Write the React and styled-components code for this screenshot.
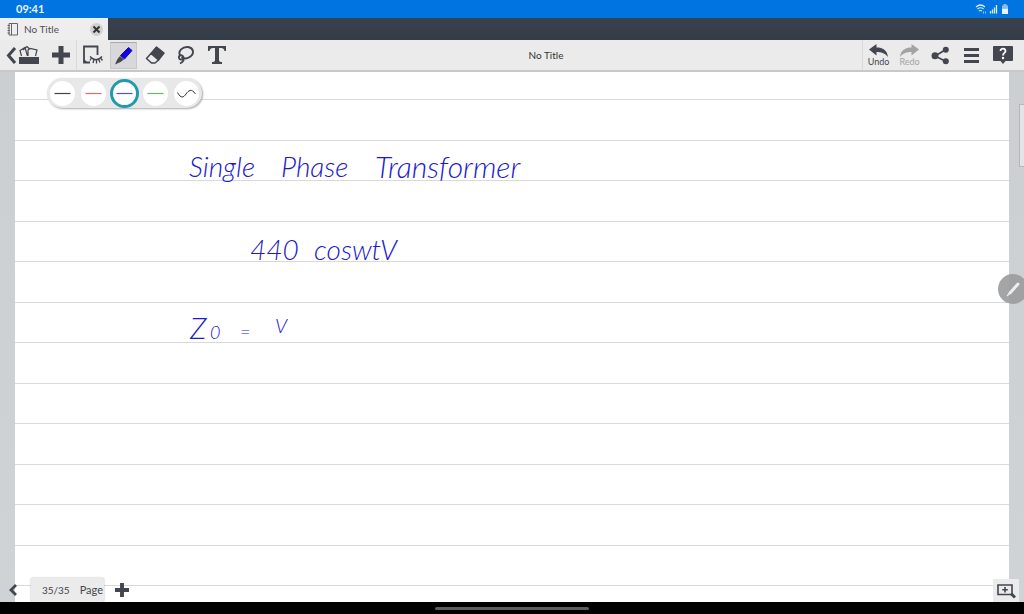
import React from 'react';
import styled, { createGlobalStyle, css } from 'styled-components';

const INK = '#43454f';

const GlobalStyle = createGlobalStyle`
  *, *::before, *::after { box-sizing: border-box; }
  body { margin: 0; background: #000; }
  svg { display: block; }
`;

const Screen = styled.div`
  display: flex;
  flex-direction: column;
  min-height: 100vh;
  font-family: Lato, 'Open Sans', sans-serif;
  color: ${INK};
`;

const PlainButton = styled.button`
  padding: 0;
  border: 0;
  background: none;
  color: inherit;
  font: inherit;
  cursor: pointer;
`;

const StatusBar = styled.div`
  display: flex;
  align-items: center;
  justify-content: space-between;
  height: 18px;
  padding: 0 15px 0 16px;
  background: #0074e0;
  color: #eaf4ff;
  font-size: 11px;
  line-height: 18px;
  font-weight: 700;
`;

const TabStrip = styled.nav`
  display: flex;
  height: 22px;
  background: linear-gradient(#38424f, #343c46);
`;

const Tab = styled.div`
  display: flex;
  align-items: center;
  width: 108px;
  padding: 0 5px 0 7px;
  background: #eeeeee;
  color: #505050;
  font-size: 10px;
`;

const TabName = styled.span`
  flex: 1;
  padding-left: 6px;
`;

const CloseButton = styled(PlainButton)`
  display: grid;
  place-items: center;
  width: 13px;
  height: 13px;
  border-radius: 50%;
  background: #d0d0d0;
`;

const Toolbar = styled.header`
  display: flex;
  height: 32px;
  padding-right: 6px;
  background: #ebebeb;
  border-bottom: 2px solid #c6c8c9;
`;

const ToolGroup = styled.div`
  display: flex;
  align-items: center;
  ${(p) => p.$divided && css`border-left: 1px solid #d9d9d9;`}
`;

const Tool = styled(PlainButton)`
  display: flex;
  flex-direction: column;
  align-items: center;
  justify-content: center;
  width: ${(p) => (p.$wide ? 45 : 31)}px;
  height: 30px;
  color: ${(p) => (p.disabled ? '#a3a3a3' : INK)};
  font-size: 9px;
  line-height: 10px;
`;

const ToolFace = styled.span`
  display: grid;
  place-items: center;
  width: 27px;
  height: 27px;
  ${(p) => p.$active && css`
    background: #d8d8da;
    border: 1px solid #c8c8ca;
    border-top-color: #aaaaaa;
  `}
`;

const Title = styled.h1`
  flex: 1;
  margin: 0;
  padding-right: 2px;
  text-align: center;
  font-size: 10px;
  line-height: 30px;
  font-weight: 400;
  color: #333333;
`;

const Workspace = styled.main`
  position: relative;
  display: flex;
  flex: 1;
  padding: 0 15px;
  overflow: hidden;
  background: linear-gradient(#cbcfd1, #d0d3d5);
`;

const Sheet = styled.section`
  position: relative;
  display: flex;
  flex-direction: column;
  flex: 1;
  min-height: 480px;
  background: #ffffff;
`;

const Rule = styled.div`
  flex: ${(p) => (p.$first ? '0 0 28px' : '1')};
  border-bottom: 1px solid #d9d9d9;
`;

const SheetFoot = styled.div`
  height: 16px;
`;

const Ink = styled.span`
  position: absolute;
  left: ${(p) => p.$x}px;
  top: ${(p) => p.$y}px;
  color: #2018d0;
  font-size: ${(p) => p.$size}px;
  line-height: 32px;
  font-style: italic;
  font-weight: 300;
  white-space: nowrap;
`;

const Palette = styled.div`
  position: absolute;
  left: 47px;
  top: 6px;
  display: flex;
  align-items: center;
  height: 30px;
  border-radius: 15px;
  background: #e8e8e8;
  box-shadow: 1px 1px 2px #aaaaaa;
`;

const PenButton = styled(PlainButton)`
  display: grid;
  place-items: center;
  width: ${(p) => (p.$active ? 29 : 25)}px;
  height: ${(p) => (p.$active ? 29 : 25)}px;
  margin: 0 ${(p) => (p.$active ? 1 : 3)}px;
  border: ${(p) => (p.$active ? '3px solid #2199ae' : '0')};
  border-radius: 50%;
  background: #ffffff;
`;

const PageBar = styled.div`
  position: absolute;
  left: 0;
  bottom: 0;
  display: flex;
  align-items: center;
  height: 25px;
`;

const PageArrow = styled(PlainButton)`
  display: grid;
  place-items: center;
  width: 31px;
  height: 24px;
  padding-right: 6px;
`;

const PageLabel = styled(PlainButton)`
  display: flex;
  align-items: center;
  justify-content: flex-end;
  gap: 10px;
  width: 73px;
  height: 24px;
  padding-right: 1px;
  border-radius: 2px;
  background: #ebebeb;
  box-shadow: 0 0 2px #aaaaaa;
  font-size: 11px;
`;

const PageCount = styled.span`
  font-size: 10px;
`;

const AddPage = styled(PlainButton)`
  display: grid;
  place-items: center;
  width: 35px;
  height: 25px;
`;

const ZoomButton = styled(PlainButton)`
  position: absolute;
  right: 5px;
  bottom: 0;
  display: grid;
  place-items: center;
  width: 26px;
  height: 23px;
  background: #ebebeb;
`;

const FloatingPen = styled(PlainButton)`
  position: absolute;
  right: -4px;
  top: 202px;
  display: grid;
  place-items: center;
  width: 30px;
  height: 30px;
  border-radius: 50%;
  background: #9a9b9ce6;
`;

const EdgeHandle = styled.div`
  position: absolute;
  right: 0;
  top: 32px;
  width: 5px;
  height: 63px;
  border: 1px solid #b4b7b9;
  border-right: 0;
  background: #e2e4e5;
`;

const NavBar = styled.footer`
  display: grid;
  place-items: center;
  height: 12px;
  background: #000000;
`;

const NavPill = styled.div`
  width: 15%;
  height: 3px;
  border-radius: 2px;
  background: #5c5c5c;
`;

const Plus = ({ size }) => (
  <svg width={size} height={size} viewBox="0 0 18 18" fill="currentColor">
    <path d="M6.500 0h5v6.500H18v5h-6.500V18h-5v-6.500H0v-5h6.500z" />
  </svg>
);

const Chevron = () => (
  <svg width="8" height="12" viewBox="0 0 8 12" fill="none" stroke="currentColor" strokeWidth="2.800">
    <path d="M7 1 2 6l5 5" />
  </svg>
);

const StatusIcons = () => (
  <svg width="34" height="12" viewBox="0 0 34 12" fill="none" stroke="#d8ebff">
    <path d="M1 4Q5.500 0 10 4M2.500 6Q5.500 3.500 8.500 6M4 8Q5.500 7 7 8" strokeWidth="1.200" />
    <path d="M8.500 8.500v2M10.500 8.500v2" strokeWidth="1" opacity=".7" />
    <path d="M15.500 8v2.500M17.500 6.500v4M19.500 4.500v6M21.500 2v8.500" strokeWidth="1.300" />
    <path d="M27 2.500h1.500V1h3v1.500H33V5.500h-6z" fill="#8abcf0" stroke="none" />
    <path d="M27 5.500h6v5.500h-6z" fill="#eaf4ff" stroke="none" />
  </svg>
);

const NotebookIcon = () => (
  <svg width="11" height="13" viewBox="0 0 11 13" fill="none" stroke="#666" strokeWidth="1">
    <path d="M2 .5h8.500v11.500H2zM4.500.5V12M.5 2.500h2.500M.5 5h2.500M.5 7.500h2.500M.5 10h2.500" />
  </svg>
);

const BackIcon = () => (
  <svg width="34" height="19" viewBox="0 0 34 19" fill="none" stroke="currentColor">
    <path d="M9 2 2.500 9.500 9 17" strokeWidth="3" />
    <path d="M13 11h20v7H13z" fill="currentColor" stroke="none" />
    <path d="M15.500 10 14 4.500l5-3 2.500 8.500M17 4l4-3.500 2 2M22 10V4l2-1.500 7 1.500-1.500 6" strokeWidth="1.200" />
  </svg>
);

const ViewIcon = () => (
  <svg width="21" height="20" viewBox="0 0 21 20" fill="none" stroke="currentColor">
    <path d="M8 17.500H2v-16h13.500v8.500" strokeWidth="1.800" />
    <path d="M2 14v3.500h3.500z" fill="currentColor" stroke="none" />
    <path d="M8 11.500Q14 18 20 11.500" strokeWidth="1.500" />
    <path d="M9.500 13 8 15.500M12 14.500l-1 3.500M14.500 14.700V18.500M16.500 14l1.500 3.500M18.500 13l2 2.500" strokeWidth="1.300" />
  </svg>
);

const PenIcon = () => (
  <svg width="20" height="20" viewBox="0 0 20 20">
    <path d="M14.500 2.500 18 5.500 10.500 14 6.500 10.500z" fill="#1006dc" stroke="#1006dc" strokeWidth="1" strokeLinejoin="round" />
    <path d="M6 11 10 14.500 6.500 17 1 19.500 3.500 14z" fill="#43454f" />
  </svg>
);

const EraserIcon = () => (
  <svg width="20" height="20" viewBox="0 0 20 20" stroke="currentColor" strokeWidth="1.500" strokeLinejoin="round">
    <path d="M11.500 2 19 8 13.500 15 6 8.500z" fill="currentColor" />
    <path d="M6 8.500 13.500 15 10 18H6.500L1.500 13.500z" fill="#ebebeb" />
  </svg>
);

const LassoIcon = () => (
  <svg width="18" height="20" viewBox="0 0 18 20" fill="none" stroke="currentColor" strokeWidth="1.900">
    <path d="M3.500 11C0 6 6 1.500 11 2s7 6 2.500 9.500C11 13.500 7.500 14 4.500 12" />
    <path d="M6.500 12.500C6 9 1 10 2 13s5 1 4.500-.5C7 15 6.500 17 3 18.500" />
  </svg>
);

const TextIcon = () => (
  <svg width="18" height="18" viewBox="0 0 18 18" fill="currentColor">
    <path d="M0 0h18v5h-1.500Q16 2 13 2h-2v12q0 2 3 2v2H4v-2q3 0 3-2V2H5Q2 2 1.500 5H0z" />
  </svg>
);

const Arrow = ({ flipped }) => (
  <svg width="19" height="13" viewBox="0 0 19 13" fill="currentColor">
    <path d={flipped ? 'M19 5.500 11.500 0v3.500C5 3.500 1 6 0 13 3 9 7 8 11.500 8v3.500z' : 'M0 5.500 7.500 0v3.500C14 3.500 18 6 19 13 16 9 12 8 7.500 8v3.500z'} />
  </svg>
);

const ShareIcon = () => (
  <svg width="19" height="19" viewBox="0 0 19 19" fill="currentColor">
    <path d="M15 3.500 4 10l11 5.500" fill="none" stroke="currentColor" strokeWidth="1.700" />
    <circle cx="14.800" cy="3.700" r="3" />
    <circle cx="4" cy="9.800" r="3.500" />
    <circle cx="14.800" cy="15.300" r="3" />
  </svg>
);

const MenuIcon = () => (
  <svg width="15" height="15" viewBox="0 0 15 15" fill="currentColor">
    <path d="M0 0h15v3H0zM0 6h15v3H0zM0 12h15v3H0z" />
  </svg>
);

const HelpIcon = () => (
  <svg width="20" height="18" viewBox="0 0 20 18">
    <path d="M1 0h18q1 0 1 1v13q0 1-1 1h-6.500L10 18 7.500 15H1q-1 0-1-1V1q0-1 1-1z" fill="currentColor" />
    <path d="M7.500 5C7.500 1.500 13 2 12.500 5.200 12.300 7 10 7 10 9.500" fill="none" stroke="#fff" strokeWidth="1.800" />
    <circle cx="10" cy="12" r="1.200" fill="#fff" />
  </svg>
);

const ZoomIcon = () => (
  <svg width="19" height="16" viewBox="0 0 19 16" fill="none" stroke="currentColor" strokeWidth="1.600">
    <path d="M1 2h14v9.500H1zM8 4v5.500M5.300 6.700h5.500" />
    <path d="M14 10.500 18 14.500" strokeWidth="3" />
  </svg>
);

const tools = [
  { name: 'View only', icon: <ViewIcon /> },
  { name: 'Pen', icon: <PenIcon />, active: true },
  { name: 'Eraser', icon: <EraserIcon /> },
  { name: 'Lasso', icon: <LassoIcon /> },
  { name: 'Text', icon: <TextIcon /> },
];

const pens = [
  { name: 'Black pen', color: '#444444' },
  { name: 'Red pen', color: '#df6b6b' },
  { name: 'Blue pen', color: '#5050d8', active: true },
  { name: 'Green pen', color: '#6db56d' },
];

const notes = [
  { text: 'Single', x: 174, y: 78, size: 28 },
  { text: 'Phase', x: 266, y: 78, size: 28 },
  { text: 'Transformer', x: 360, y: 78, size: 30 },
  { text: '440', x: 235, y: 161, size: 28 },
  { text: 'coswtV', x: 299, y: 161, size: 28 },
  { text: 'Z', x: 175, y: 239, size: 30 },
  { text: '0', x: 195, y: 244, size: 18 },
  { text: '=', x: 225, y: 243, size: 18 },
  { text: 'V', x: 260, y: 237, size: 20 },
];

export default function App() {
  return (
    <Screen>
      <GlobalStyle />
      <StatusBar>
        <span>09:41</span>
        <StatusIcons />
      </StatusBar>
      <TabStrip>
        <Tab>
          <NotebookIcon />
          <TabName>No Title</TabName>
          <CloseButton aria-label="Close tab">
            <svg width="7" height="7" viewBox="0 0 7 7" stroke="#333" strokeWidth="2"><path d="m.5.5 6 6M6.500.5l-6 6" /></svg>
          </CloseButton>
        </Tab>
      </TabStrip>
      <Toolbar>
        <ToolGroup>
          <Tool $wide aria-label="Back to notes"><BackIcon /></Tool>
          <Tool aria-label="Add"><Plus size={18} /></Tool>
        </ToolGroup>
        <ToolGroup $divided>
          {tools.map((t) => (
            <Tool key={t.name} aria-label={t.name} aria-pressed={!!t.active}>
              <ToolFace $active={t.active}>{t.icon}</ToolFace>
            </Tool>
          ))}
        </ToolGroup>
        <Title>No Title</Title>
        <ToolGroup $divided>
          <Tool><Arrow />Undo</Tool>
          <Tool disabled><Arrow flipped />Redo</Tool>
          <Tool aria-label="Share"><ShareIcon /></Tool>
          <Tool aria-label="Menu"><MenuIcon /></Tool>
          <Tool aria-label="Help"><HelpIcon /></Tool>
        </ToolGroup>
      </Toolbar>
      <Workspace>
        <Sheet>
          <Rule $first />
          {Array.from({ length: 12 }, (_, i) => <Rule key={i} />)}
          <SheetFoot />
          {notes.map((n) => (
            <Ink key={n.text + n.x} $x={n.x} $y={n.y} $size={n.size}>{n.text}</Ink>
          ))}
        </Sheet>
        <Palette>
          {pens.map((p) => (
            <PenButton key={p.name} $active={p.active} aria-label={p.name} aria-pressed={!!p.active}>
              <svg width="17" height="3" viewBox="0 0 17 3" stroke={p.color} strokeWidth="1.200"><path d="M.5 1.500h16" /></svg>
            </PenButton>
          ))}
          <PenButton aria-label="Pen style">
            <svg width="19" height="9" viewBox="0 0 19 9" fill="none" stroke="#333" strokeWidth="1"><path d="M.5 3.500C4 10 6.500 8.500 9 5s5.500-6 9.500 0" /></svg>
          </PenButton>
        </Palette>
        <EdgeHandle />
        <FloatingPen aria-label="Pen shortcut">
          <svg width="14" height="15" viewBox="0 0 14 15" stroke="#eee" strokeLinecap="round"><path d="M12 2 4 11" strokeWidth="3" /><path d="M4 11 1.500 13.500" strokeWidth="1.500" /></svg>
        </FloatingPen>
        <PageBar>
          <PageArrow aria-label="Previous page"><Chevron /></PageArrow>
          <PageLabel><PageCount>35/35</PageCount>Page</PageLabel>
          <AddPage aria-label="Add page"><Plus size={14} /></AddPage>
        </PageBar>
        <ZoomButton aria-label="Zoom"><ZoomIcon /></ZoomButton>
      </Workspace>
      <NavBar><NavPill /></NavBar>
    </Screen>
  );
}
